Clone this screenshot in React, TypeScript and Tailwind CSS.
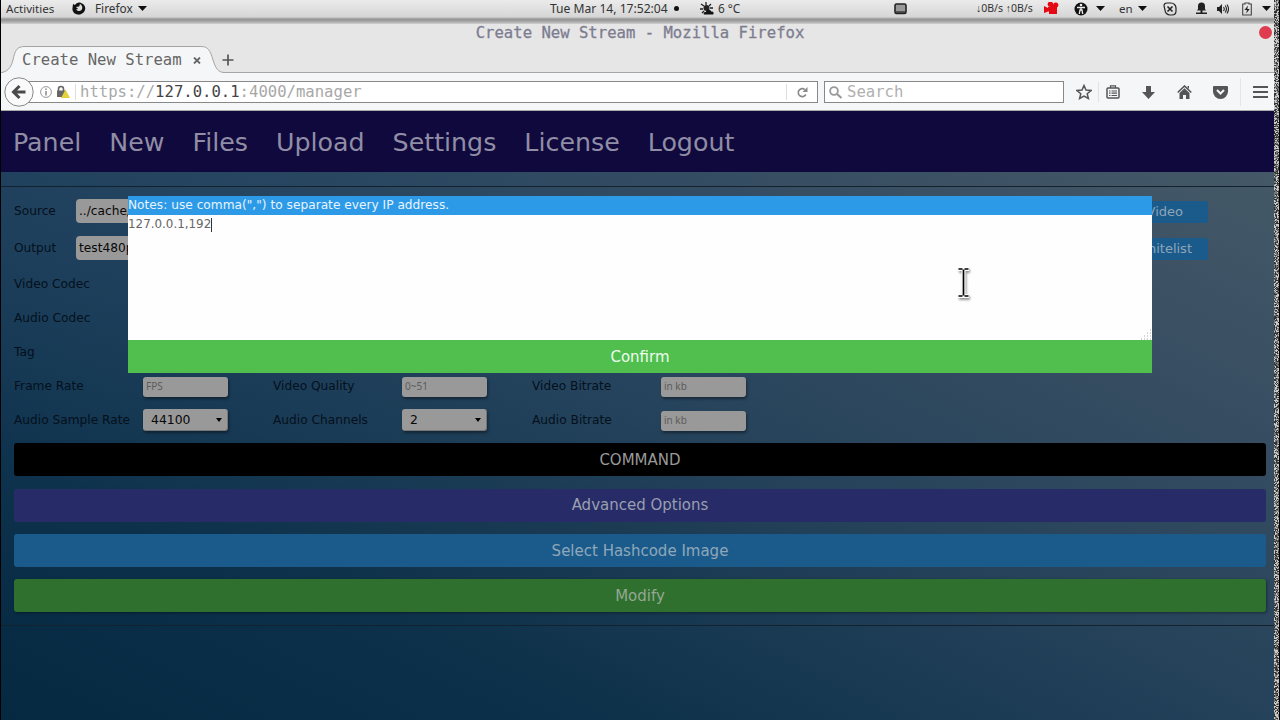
import React from 'react';

const NAV_ITEMS = ['Panel', 'New', 'Files', 'Upload', 'Settings', 'License', 'Logout'];

// Tiny LCG so the static on the screen edge is the same on every render
const buildStatic = () => {
  let seed = 7;
  const next = () => {
    seed = (seed * 1103515245 + 12345) % 2147483648;
    return seed / 2147483648;
  };
  let light = '';
  let dark = '';
  for (let y = 0; y < 720; y++) {
    for (let x = 0; x < 5; x++) {
      const n = next();
      if (n < 0.33) light += `M${x} ${y}h1v1h-1z`;
      else if (n < 0.66) dark += `M${x} ${y}h1v1h-1z`;
    }
  }
  return { light, dark };
};

const EDGE = buildStatic();

const Caret: React.FC<{ className?: string }> = ({ className = '' }) => (
  <svg className={`h-[5px] w-[9px] shrink-0 ${className}`} viewBox="0 0 9 5">
    <path d="M0 0h9L4.500 5z" fill="#111" />
  </svg>
);

const TopBar: React.FC = () => (
  <div className="relative flex h-[24px] items-start bg-[linear-gradient(#ebebeb_0px,#d6d6d6_17px,#969696_19px,#a0a0a0_21px,#e0e0e0_25px)] font-['Noto_Sans',sans-serif] text-[12px] leading-[17px] text-[#333]">
    <span className="ml-[5px] w-[66px] text-[11.6px]">Activities</span>
    <svg className="mt-[2px] h-[13px] w-[14px]" viewBox="0 0 14 13">
      <path d="M1 2l2 1c1-2 4-3 6-2 3 1 5 4 4 7-1 3-4 5-7 4.600C2 12.200 0 9 .5 6z" fill="#111" />
      <path d="M4 5l3-.5c1-1.500 1-2 .5-2.800C9.500 2.500 10.500 4 10.300 6c-.2 2-2 3.500-4 3-1-.3-1.800-1-2-2l2 .2z" fill="#ddd" />
    </svg>
    <span className="ml-[9px] text-[11.8px]">Firefox</span>
    <Caret className="ml-[5px] mt-[6px]" />
    <div className="absolute left-[549px] top-0 flex">
      <span className="w-[124px] whitespace-nowrap text-[12.1px]">Tue Mar 14, 17:52:04</span>
      <span className="mt-[6px] h-[5px] w-[5px] rounded-full bg-[#111]" />
      <svg className="ml-[21px] mt-[2px] h-[13px] w-[14px]" viewBox="0 0 14 13">
        <path d="M6 0v3M1 2l3 2M0 7h3M11 2L9 4M13 6h-3M2 11l2-2" stroke="#222" strokeWidth="1.300" />
        <circle cx="6.500" cy="6" r="3" fill="#222" />
        <path d="M4 12.500c-1-1 0-3 2-2.500 0-3 5-3 5-.5 3-.5 3 2.500 2 3z" fill="#111" />
      </svg>
      <span className="ml-[4px] whitespace-nowrap text-[11.8px]">6 °C</span>
    </div>
    <div className="ml-auto flex h-[17px] items-center pr-[3px]">
      <svg className="mr-[69px] h-[12px] w-[13px]" viewBox="0 0 13 12">
        <rect x="1" y="1" width="11" height="9.500" rx="1.500" fill="#999" stroke="#222" strokeWidth="1.600" />
        <path d="M2 9h9" stroke="#222" strokeWidth="1.200" />
      </svg>
      <span className="w-[59px] whitespace-nowrap text-[10.5px]">↓0B/s ↑0B/s</span>
      <svg className="ml-[9px] h-[13px] w-[16px]" viewBox="0 0 16 13">
        <path d="M0 4l4 2V5h2a2.700 2.700 0 1 1 3-2 2.700 2.700 0 1 1 4 2.500V12H5V9.500H4L0 11z" fill="#e50914" />
      </svg>
      <svg className="ml-[14px] h-[14px] w-[14px]" viewBox="0 0 14 14">
        <circle cx="7" cy="7" r="6.500" fill="#111" />
        <circle cx="7" cy="3" r="1.300" fill="#eee" />
        <path d="M3 5.500h8M7 5v3.500M5.300 12l.7-4h2l.7 4" fill="none" stroke="#eee" strokeWidth="1.300" />
      </svg>
      <Caret className="ml-[8px]" />
      <span className="ml-[14px] w-[14px] text-[11.5px]">en</span>
      <Caret className="ml-[5px]" />
      <svg className="ml-[16px] h-[14px] w-[14px]" viewBox="0 0 14 14">
        <path d="M4 1h4a5 5 0 0 1 5 5v3c0 3-2 4-4 4H7a5 5 0 0 1-5-5L1 4c0-2 1-3 3-3z" fill="none" stroke="#222" strokeWidth="1.200" />
        <path d="M4.500 4.500l5 5m0-5l-5 5" stroke="#222" strokeWidth="1.600" />
      </svg>
      <svg className="ml-[19px] h-[13px] w-[11px]" viewBox="0 0 11 13">
        <path d="M2 7V4a3.500 3.500 0 0 1 7 0v3l1 1.500H1zM4.500 8h2v3h-2zM0 10.500h11V12H0z" fill="#222" />
      </svg>
      <svg className="ml-[10px] h-[12px] w-[12px]" viewBox="0 0 12 12">
        <path d="M0 4h2l3-3v10L2 8H0z" fill="#222" />
        <path d="M6.500 4q1.500 2 0 4M8.200 2.500q2.500 3.500 0 7M10 1.500q3 4.500 0 9" fill="none" stroke="#222" strokeWidth="1.100" />
      </svg>
      <svg className="ml-[13px] h-[14px] w-[10px]" viewBox="0 0 10 14">
        <path d="M3 2V1h4v1h2.300v11H.7V2z" fill="none" stroke="#444" strokeWidth="1.100" />
        <path d="M6 3.500L2.500 8H5l-.8 3.500L7.800 7H5.300z" fill="#222" />
      </svg>
      <Caret className="ml-[10px]" />
    </div>
  </div>
);

const TabStrip: React.FC = () => (
  <div className="relative flex h-[49px] flex-col bg-[#e6e6e6] font-['DejaVu_Sans_Mono',monospace] text-[15.6px] leading-[19px]">
    <div className="flex h-[22px] items-start justify-center pl-[5px] text-[#7d7d90] [-webkit-text-stroke:0.3px_#7d7d90]">
      <span>Create New Stream - Mozilla Firefox</span>
    </div>
    <div className="absolute right-[2px] top-[2px] h-[13px] w-[13px] rounded-full bg-[#e03c50]" />
    <div className="relative flex h-[27px] items-center border-b border-[#a5a5a5] pt-[2px]">
      <svg className="absolute left-0 top-0 h-[27px] w-[224px]" viewBox="0 0 224 27">
        <path d="M0 26.500C6 26 10 22 12 14C14 4 16 .5 24 .5H200C207 .5 209 4 212 14C215 23 217 26 223 26.500V27H0z" fill="#f5f6f7" />
        <path d="M0 26.500C6 26 10 22 12 14C14 4 16 .5 24 .5H200C207 .5 209 4 212 14C215 23 217 26 223 26.500" fill="none" stroke="#a5a5a5" />
      </svg>
      <span className="relative ml-[21px] text-[#666]">Create New Stream</span>
      <svg className="relative ml-[11px] h-[7px] w-[8px]" viewBox="0 0 8 7">
        <path d="M1 .5l6 6m0-6l-6 6" stroke="#666" strokeWidth="1.800" />
      </svg>
      <svg className="relative ml-[21px] h-[12px] w-[12px]" viewBox="0 0 12 12">
        <path d="M6 .5v11M.5 6h11" stroke="#555" strokeWidth="1.700" />
      </svg>
    </div>
  </div>
);

const Toolbar: React.FC = () => (
  <div className="relative flex h-[38px] items-center border-b border-[#aaa] bg-[#f5f6f7] pt-px font-['DejaVu_Sans_Mono',monospace] text-[15.6px]">
    <svg className="relative z-10 ml-[3px] h-[30px] w-[30px] shrink-0" viewBox="0 0 30 30">
      <circle cx="15" cy="15" r="14.200" fill="#fafafa" stroke="#888" />
      <path d="M15.500 9l-6 6 6 6M10 15h11.500" fill="none" stroke="#4a4a4a" strokeWidth="3" />
    </svg>
    <div className="-ml-[7px] flex h-[22px] w-[791px] shrink-0 items-center border border-[#888] bg-white">
      <svg className="ml-[12px] h-[12px] w-[12px]" viewBox="0 0 12 12">
        <circle cx="6" cy="6" r="5.400" fill="none" stroke="#999" />
        <path d="M6 2.500v1.500M6 5v4.500" stroke="#888" strokeWidth="1.500" />
      </svg>
      <svg className="ml-[4px] h-[14px] w-[15px]" viewBox="0 0 15 14">
        <path d="M2.500 6V4a2.500 2.500 0 0 1 5 0v2" fill="none" stroke="#666" strokeWidth="1.600" />
        <path d="M1 5.500h8V12H1z" fill="#666" />
        <path d="M9.500 4.500L14 13H5z" fill="#e5cf3b" />
      </svg>
      <div className="ml-[4px] h-[16px] w-px bg-[#ddd]" />
      <span className="ml-[4px] whitespace-nowrap pt-[2px] text-[#a8a8a8]">
        https://<span className="text-[#444]">127.0.0.1</span>:4000/manager
      </span>
      <div className="ml-auto flex h-[16px] w-[31px] items-center justify-center border-l border-[#ddd]">
        <svg className="h-[11px] w-[11px]" viewBox="0 0 11 11">
          <path d="M8.800 7.500A4 4 0 1 1 7.800 2.500" fill="none" stroke="#888" strokeWidth="1.600" />
          <path d="M10.500 0v5h-5z" fill="#888" />
        </svg>
      </div>
    </div>
    <div className="ml-[6px] flex h-[22px] w-[240px] shrink-0 items-center border border-[#888] bg-white">
      <svg className="ml-[4px] h-[13px] w-[14px]" viewBox="0 0 14 13">
        <circle cx="5" cy="5" r="3.900" fill="none" stroke="#999" strokeWidth="1.800" />
        <path d="M8 8l4.500 4" stroke="#999" strokeWidth="2.200" />
      </svg>
      <span className="ml-[4px] pt-[2px] text-[#b0b0b0]">Search</span>
    </div>
    <svg className="ml-[12px] h-[16px] w-[16px]" viewBox="0 0 16 16">
      <path d="M8 1.500l2 4.600 5 .4-3.800 3.200 1.200 4.800L8 12l-4.400 2.500 1.200-4.800L1 6.500l5-.4z" fill="none" stroke="#555" strokeWidth="1.500" />
    </svg>
    <div className="ml-[6px] h-[20px] w-px bg-[#e2e2e2]" />
    <svg className="ml-[7px] h-[14px] w-[14px]" viewBox="0 0 14 14">
      <rect x="1" y="3" width="12" height="10" rx="1" fill="none" stroke="#555" strokeWidth="1.500" />
      <path d="M4.500 3V.8h5V3M3 6h1.500M5.500 6H11M3 8.200h1.500M5.500 8.200H11M3 10.500h1.500M5.500 10.500H11" fill="none" stroke="#555" strokeWidth="1.200" />
    </svg>
    <svg className="ml-[22px] h-[13px] w-[13px]" viewBox="0 0 13 13">
      <path d="M4 0h5v6h4l-6.500 7L0 6h4z" fill="#555" />
    </svg>
    <svg className="ml-[22px] h-[14px] w-[15px]" viewBox="0 0 15 14">
      <path d="M.7 7.500L7.500 1l6.800 6.500" fill="none" stroke="#555" strokeWidth="1.600" />
      <path d="M2.500 8l5-4.700 5 4.700v6H9v-4H6v4H2.500zM10.500 1H12v3l-1.500-1.500z" fill="#555" />
    </svg>
    <svg className="ml-[21px] h-[13px] w-[15px]" viewBox="0 0 15 13">
      <path d="M1 0h13q1 0 1 1v4.500a7.500 7.500 0 0 1-15 0V1q0-1 1-1z" fill="#555" />
      <path d="M4 4l3.500 3.500L11 4" fill="none" stroke="#f5f6f7" strokeWidth="2" />
    </svg>
    <div className="ml-[12px] h-[28px] w-px bg-[#e6e6e6]" />
    <svg className="ml-[12px] h-[12px] w-[15px]" viewBox="0 0 15 12">
      <path d="M0 1h15M0 6h15M0 11h15" stroke="#555" strokeWidth="2" />
    </svg>
  </div>
);

interface FieldProps {
  label: string;
  placeholder?: string;
  value?: string;
}

const Field: React.FC<FieldProps> = ({ label, placeholder, value }) => (
  <div className="flex w-[259px] items-center">
    <span className="w-[129px] whitespace-nowrap">{label}</span>
    {value ? (
      <div className="flex h-[22px] w-[85px] items-center justify-between rounded-[3px] border-r border-b border-[#777] bg-[#999] pl-[8px] pr-[5px] text-[12.4px] text-[#080808] shadow-[1px_2px_3px_rgba(0,0,0,0.4)]">
        <span className="pt-px">{value}</span>
        <svg className="h-[4px] w-[6px]" viewBox="0 0 6 4">
          <path d="M0 0h6L3 4z" fill="#000" />
        </svg>
      </div>
    ) : (
      <div className="mt-px flex h-[20px] w-[85px] items-center rounded-[3px] bg-[#999] pl-[3px] font-['Noto_Sans',sans-serif] text-[10px] text-[#5c5c5c] shadow-[1px_2px_3px_rgba(0,0,0,0.4)]">
        {placeholder}
      </div>
    )}
  </div>
);

const FileRow: React.FC<{ label: string; value: string; action: string }> = ({ label, value, action }) => (
  <div className="flex h-[37px] items-center">
    <span className="w-[62px]">{label}</span>
    <div className="-mt-px flex h-[24px] w-[900px] items-center rounded-[4px] bg-[#999] pl-[3px] text-[#080808]">{value}</div>
    <div className="ml-auto mr-[58px] flex h-[22px] w-[120px] items-center justify-end rounded-[3px] bg-[#1b5b8b] text-[13px] text-[#8ea5b8]">
      <span className={action === 'Select Video' ? 'mr-[25px]' : 'mr-[16px]'}>{action}</span>
    </div>
  </div>
);

const StreamForm: React.FC = () => (
  <div className="mt-[14px] h-[440px] border-y border-[#14222e] pl-[13px] pr-[8px] pt-[6px] text-[12.2px] text-[#04101c]">
    <FileRow label="Source" value="../cache/" action="Select Video" />
    <FileRow label="Output" value="test480p" action="Whitelist" />
    <div className="flex h-[34px] items-center">Video Codec</div>
    <div className="flex h-[34px] items-center">Audio Codec</div>
    <div className="flex h-[34px] items-center">Tag</div>
    <div className="flex h-[34px] items-center">
      <Field label="Frame Rate" placeholder="FPS" />
      <Field label="Video Quality" placeholder="0~51" />
      <Field label="Video Bitrate" placeholder="in kb" />
    </div>
    <div className="flex h-[34px] items-center">
      <Field label="Audio Sample Rate" value="44100" />
      <Field label="Audio Channels" value="2" />
      <Field label="Audio Bitrate" placeholder="in kb" />
    </div>
    <div className="mt-[6px] flex flex-col gap-3 text-[15px] text-[#9a9fb0]">
      <button className="mb-px h-[33px] rounded-[3px] bg-black pt-[2px] text-[#999]">COMMAND</button>
      <button className="h-[33px] rounded-[3px] bg-[#272c68]">Advanced Options</button>
      <button className="h-[33px] rounded-[3px] bg-[#1b5b8b] pt-[2px] text-[#8fa8ba]">Select Hashcode Image</button>
      <button className="h-[33px] rounded-[3px] bg-[#30702e] pt-[2px] text-[#93a893] shadow-[1px_1px_3px_rgba(0,0,0,0.4)]">Modify</button>
    </div>
  </div>
);

const WhitelistDialog: React.FC = () => (
  <div className="absolute left-[128px] top-[196px] w-[1024px] text-[12.2px]">
    <div className="h-[19px] bg-[#2d9ae8] leading-[18px] text-[#e8f4ff]">
      Notes: use comma(",") to separate every IP address.
    </div>
    <div className="relative h-[125px] bg-[#fefefe] text-[#666]">
      <div className="flex items-center pt-px text-[11.9px]">
        <span className="leading-[17px]">127.0.0.1,192</span>
        <span className="h-[14px] w-px bg-[#333]" />
      </div>
      <svg className="absolute bottom-0 right-0 h-[12px] w-[12px]" viewBox="0 0 12 12">
        <path d="M1 11h1M4 11h1M4 8h1M7 11h1M7 8h1M7 5h1M10 11h1M10 8h1M10 5h1M10 2h1" stroke="#aaa" />
      </svg>
    </div>
    <button className="block h-[33px] w-full bg-[#51bf4e] pt-[2px] text-[15px] text-[#eefbee]">Confirm</button>
  </div>
);

export default function App() {
  return (
    <div className="relative flex h-[720px] w-[1280px] overflow-hidden bg-black pl-px font-['DejaVu_Sans',sans-serif]">
      <div className="flex w-[1273px] shrink-0 flex-col">
        <TopBar />
        <TabStrip />
        <Toolbar />
        <div className="flex-1 bg-[radial-gradient(ellipse_at_0%_20%,rgba(35,75,115,0.28)_0%,rgba(35,75,115,0)_55%),linear-gradient(to_top_right,#062942_0%,#0c3049_22%,#26435b_52%,#384e62_75%,#475b68_100%)]">
          <nav className="flex h-[61px] items-center gap-[28px] bg-[#0f093d] pl-[12px] pt-[2px] text-[25.3px] text-[#908da4]">
            {NAV_ITEMS.map((item) => (
              <span key={item}>{item}</span>
            ))}
          </nav>
          <StreamForm />
        </div>
      </div>
      <svg className="h-[720px] w-[5px] shrink-0 bg-[#777]" viewBox="0 0 5 720" shapeRendering="crispEdges">
        <path d={EDGE.light} fill="#c8c8c8" />
        <path d={EDGE.dark} fill="#333" />
      </svg>
      <WhitelistDialog />
      <svg className="absolute left-[956px] top-[266px] h-[35px] w-[18px] drop-shadow-[1px_2px_1px_rgba(0,0,0,0.4)]" viewBox="0 0 18 35">
        <path d="M2 3h11M7.500 3v27M2 30h11" fill="none" stroke="#fff" strokeWidth="4" />
        <path d="M2.500 3h4M8.500 3h4M7.500 3.500v26M2.500 30h4M8.500 30h4" fill="none" stroke="#000" strokeWidth="1.700" />
      </svg>
    </div>
  );
}
